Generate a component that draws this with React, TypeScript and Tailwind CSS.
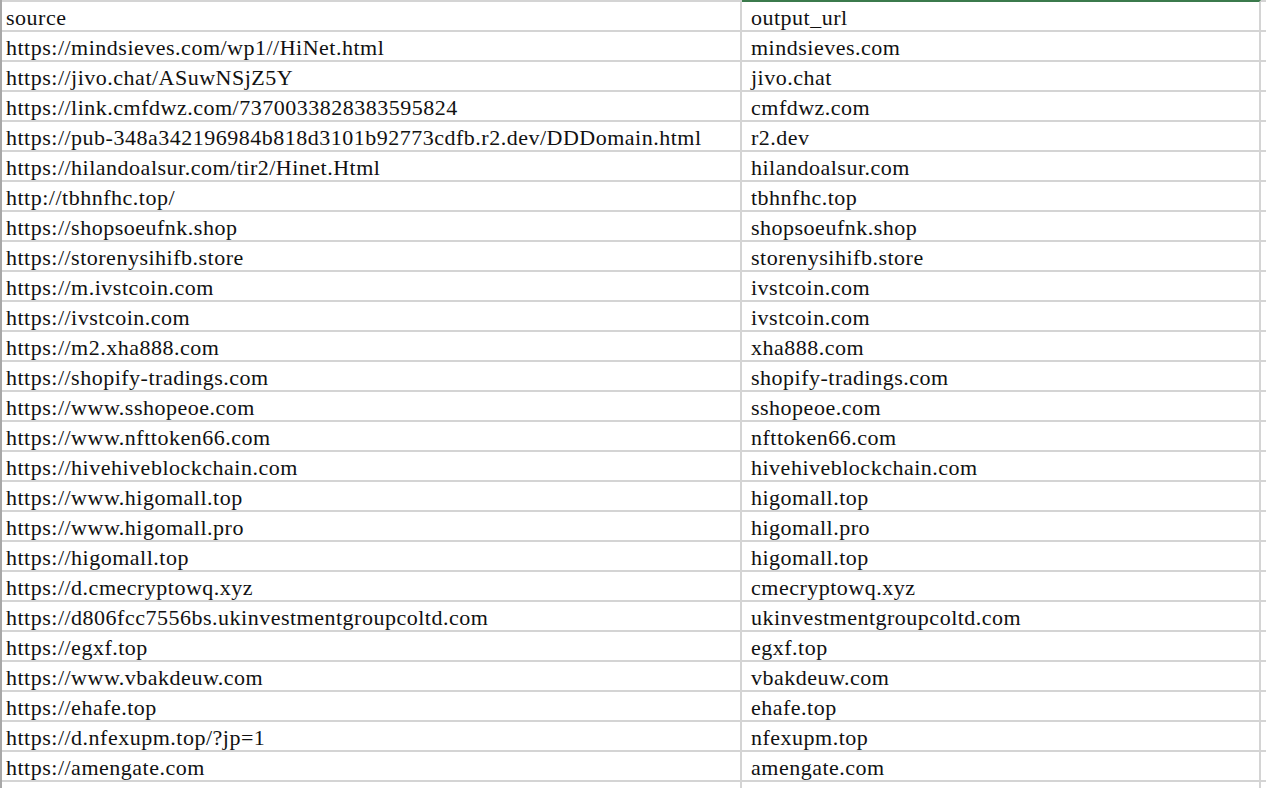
const rows: [string, string][] = [
  ["source", "output_url"],
  ["https://mindsieves.com/wp1//HiNet.html", "mindsieves.com"],
  ["https://jivo.chat/ASuwNSjZ5Y", "jivo.chat"],
  ["https://link.cmfdwz.com/7370033828383595824", "cmfdwz.com"],
  ["https://pub-348a342196984b818d3101b92773cdfb.r2.dev/DDDomain.html", "r2.dev"],
  ["https://hilandoalsur.com/tir2/Hinet.Html", "hilandoalsur.com"],
  ["http://tbhnfhc.top/", "tbhnfhc.top"],
  ["https://shopsoeufnk.shop", "shopsoeufnk.shop"],
  ["https://storenysihifb.store", "storenysihifb.store"],
  ["https://m.ivstcoin.com", "ivstcoin.com"],
  ["https://ivstcoin.com", "ivstcoin.com"],
  ["https://m2.xha888.com", "xha888.com"],
  ["https://shopify-tradings.com", "shopify-tradings.com"],
  ["https://www.sshopeoe.com", "sshopeoe.com"],
  ["https://www.nfttoken66.com", "nfttoken66.com"],
  ["https://hivehiveblockchain.com", "hivehiveblockchain.com"],
  ["https://www.higomall.top", "higomall.top"],
  ["https://www.higomall.pro", "higomall.pro"],
  ["https://higomall.top", "higomall.top"],
  ["https://d.cmecryptowq.xyz", "cmecryptowq.xyz"],
  ["https://d806fcc7556bs.ukinvestmentgroupcoltd.com", "ukinvestmentgroupcoltd.com"],
  ["https://egxf.top", "egxf.top"],
  ["https://www.vbakdeuw.com", "vbakdeuw.com"],
  ["https://ehafe.top", "ehafe.top"],
  ["https://d.nfexupm.top/?jp=1", "nfexupm.top"],
  ["https://amengate.com", "amengate.com"],
  ["", ""],
];

function Cell({ text }: { text: string }) {
  return (
    <span className="font-['Liberation_Serif'] text-[22px] tracking-[0.5px] leading-none whitespace-nowrap pb-[1px] text-[#111]">
      {text}
    </span>
  );
}

export default function App() {
  return (
    <div className="h-[788px] w-[1266px] overflow-hidden bg-white text-black">
      <div className="border-l-2 border-[#a8a8a8]">
        {rows.map(([source, output], i) => (
          <div key={i} className="flex">
            <div
              className={`flex h-[30px] w-[740px] shrink-0 items-end border-b-2 border-r-2 border-[#d4d4d4] pl-[4px] leading-none ${
                i === 0 ? "border-t-2 h-[32px]" : ""
              }`}
            >
              <Cell text={source} />
            </div>
            <div
              className={`flex h-[30px] w-[519px] shrink-0 items-end border-b-2 border-r-2 border-[#d4d4d4] pl-[9px] leading-none ${
                i === 0 ? "border-t-2 border-t-[#3b7a4c] h-[32px]" : ""
              }`}
            >
              <Cell text={output} />
            </div>
            <div
              className={`h-[30px] flex-1 border-b-2 border-[#d4d4d4] ${
                i === 0 ? "border-t-2 h-[32px]" : ""
              }`}
            />
          </div>
        ))}
      </div>
    </div>
  );
}
